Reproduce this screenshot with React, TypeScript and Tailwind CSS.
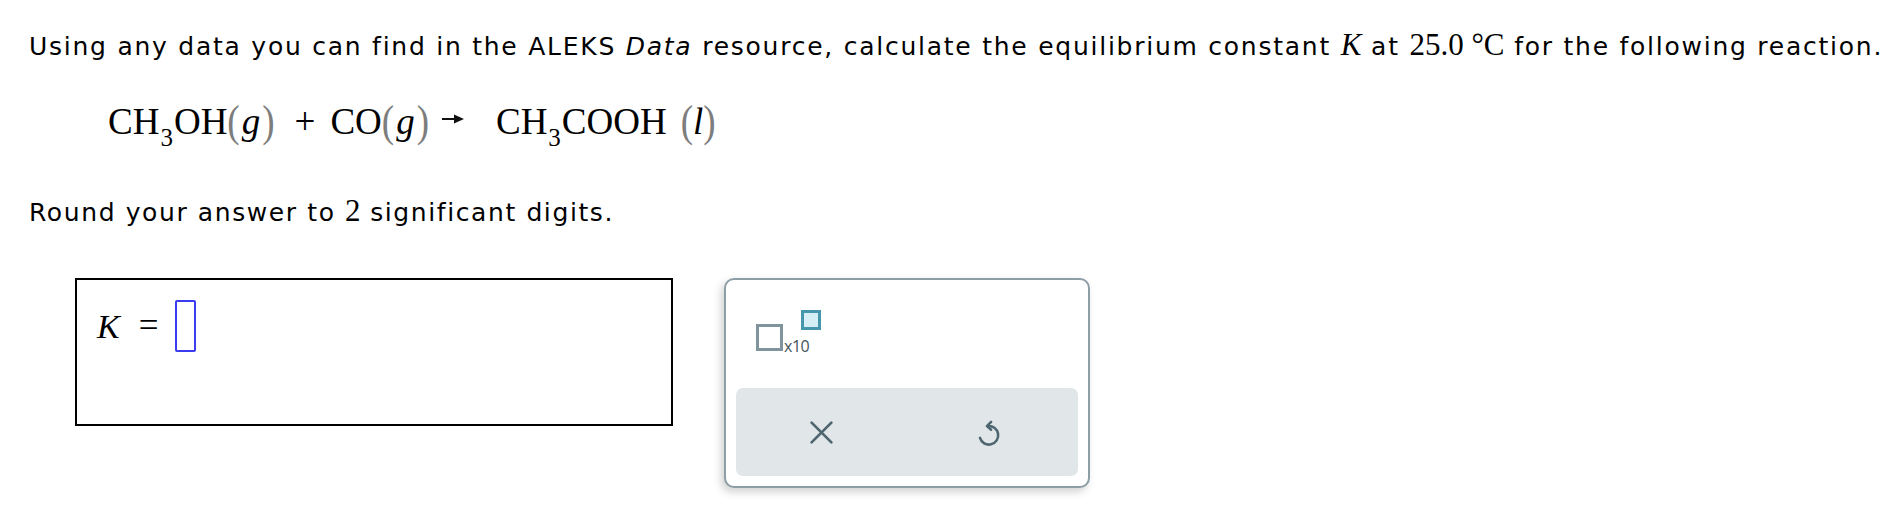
import React from "react";

const sans = "font-['DejaVu_Sans','Verdana',sans-serif]";
const serif = "font-['Liberation_Serif','Times_New_Roman',serif]";

// stretched grey brackets round a state symbol
const State = ({ s, gap = "mx-[2px]" }: { s: string; gap?: string }) => (
  <span className="inline-flex items-baseline">
    <span className="inline-block text-[#7d7d7d] scale-y-[1.2] origin-[50%_60%]">(</span>
    <span className={`italic ${gap}`}>{s}</span>
    <span className="inline-block text-[#7d7d7d] scale-y-[1.2] origin-[50%_60%]">)</span>
  </span>
);

const Sub = ({ n }: { n: string }) => (
  <span className="text-[25px] relative top-[12px] mx-[1px]">{n}</span>
);

const Arrow = () => (
  <svg width="22" height="12" viewBox="0 0 22 12" className="relative -top-[9px]">
    <path d="M0 6 H14" stroke="#111" strokeWidth="2" />
    <path d="M12 1.5 L22 6 L12 10.5 Z" fill="#111" />
  </svg>
);

const UndoIcon = () => (
  <svg width="31" height="33" viewBox="0 0 24 24" fill="none" stroke="#4e6670" strokeWidth="2" strokeLinecap="round" strokeLinejoin="round">
    <path d="M5.4 16.2 A7.2 7.2 0 1 0 11.4 7" />
    <path d="M14 3.8 L10.8 7 L14 9.8" />
  </svg>
);

const CloseIcon = () => (
  <svg width="25" height="25" viewBox="0 0 24 24" fill="none" stroke="#4e6670" strokeWidth="2.6" strokeLinecap="round">
    <path d="M2.5 2.5 L21.5 21.5" />
    <path d="M21.5 2.5 L2.5 21.5" />
  </svg>
);

export default function App() {
  return (
    <div className={`bg-white w-[1904px] h-[522px] overflow-hidden text-black ${sans}`}>
      <div className="pl-[29px] pt-[27px]">
        {/* question */}
        <p className="text-[25px] leading-[36px] tracking-[1.75px] whitespace-nowrap">
          Using any data you can find in the ALEKS <i>Data</i> resource, calculate the equilibrium constant{" "}
          <span className={`${serif} italic text-[31px] tracking-normal`}>K</span> at{" "}
          <span className={`${serif} text-[31px] tracking-normal`}>25.0 °C</span> for the following reaction.
        </p>

        {/* equation */}
        <div className={`${serif} text-[37px] leading-[40px] h-[40px] mt-[37px] pl-[79px] flex items-baseline whitespace-nowrap`}>
          <span>CH</span>
          <Sub n="3" />
          <span>OH</span>
          <State s="g" />
          <span className="ml-[20px] mr-[15px]">+</span>
          <span>CO</span>
          <State s="g" />
          <span className="ml-[13px] mr-[32px]">
            <Arrow />
          </span>
          <span>CH</span>
          <Sub n="3" />
          <span>COOH</span>
          <span className="ml-[14px]">
            <State s="l" gap="mx-0" />
          </span>
        </div>

        {/* rounding */}
        <p className="text-[25px] leading-[36px] mt-[51px] tracking-[1.6px] whitespace-nowrap">
          Round your answer to <span className={`${serif} text-[31px] tracking-normal`}>2</span> significant digits.
        </p>

        {/* answer area */}
        <div className="flex items-start mt-[47px] pl-[46px]">
          <div className="w-[598px] h-[148px] border-2 border-black pl-[20px] pt-[20px]">
            <div className={`${serif} flex items-center text-[34px]`}>
              <span className="italic">K</span>
              <span className="ml-[19px] mr-[17px] text-[35px]">=</span>
              <span className="inline-block w-[21px] h-[52px] border-2 border-[#3b3bef] rounded-[2px]" />
            </div>
          </div>

          <div className="ml-[51px] w-[366px] h-[210px] rounded-[10px] border-2 border-[#8d9ea6] bg-white shadow-[-3px_4px_8px_rgba(0,0,0,0.18)] flex flex-col">
            <div className="h-[108px] pl-[30px] pt-[30px]">
              <div className="flex items-end">
                <span className="inline-block w-[27px] h-[27px] border-[3px] border-[#7f949c]" />
                <span className="text-[16px] leading-[16px] font-medium text-[#44555c] ml-[1px] font-['Open_Sans',sans-serif] -mb-[3px] tracking-[-0.5px]">x10</span>
                <span className="inline-block w-[20px] h-[20px] border-[3px] border-[#4797ac] bg-[#d6eef5] -ml-[8px] mb-[21px]" />
              </div>
            </div>
            <div className="mx-[10px] h-[88px] rounded-[7px] bg-[#e1e6e9] flex items-center">
              <div className="w-1/2 flex justify-center">
                <CloseIcon />
              </div>
              <div className="w-1/2 flex justify-center pr-[8px]">
                <UndoIcon />
              </div>
            </div>
          </div>
        </div>
      </div>
    </div>
  );
}
